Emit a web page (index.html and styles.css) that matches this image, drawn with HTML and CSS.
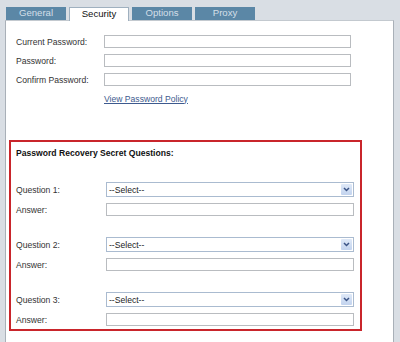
FILE: index.html
```html
<!DOCTYPE html>
<html>
<head>
<meta charset="utf-8">
<link rel="stylesheet" href="styles.css">
</head>
<body>
<div class="tabs">
  <div class="tab">General</div>
  <div class="tab active">Security</div>
  <div class="tab">Options</div>
  <div class="tab">Proxy</div>
</div>
<div class="panel">
  <div class="pw">
    <div class="row"><span class="lbl">Current Password:</span><span class="inp"></span></div>
    <div class="row"><span class="lbl">Password:</span><span class="inp"></span></div>
    <div class="row"><span class="lbl">Confirm Password:</span><span class="inp"></span></div>
    <div class="row link-row"><span class="lbl"></span><a class="link">View Password Policy</a></div>
  </div>
  <div class="recovery">
    <div class="title">Password Recovery Secret Questions:</div>
    <div class="q">
      <div class="row"><span class="lbl2">Question 1:</span><span class="sel"><span class="val">--Select--</span><span class="arrow"><svg width="7" height="5" viewBox="0 0 7 5"><path d="M1 1 L3.5 3.5 L6 1" fill="none" stroke="#3b5486" stroke-width="1.5"/></svg></span></span></div>
      <div class="row"><span class="lbl2">Answer:</span><span class="ans"></span></div>
    </div>
    <div class="q">
      <div class="row"><span class="lbl2">Question 2:</span><span class="sel"><span class="val">--Select--</span><span class="arrow"><svg width="7" height="5" viewBox="0 0 7 5"><path d="M1 1 L3.5 3.5 L6 1" fill="none" stroke="#3b5486" stroke-width="1.5"/></svg></span></span></div>
      <div class="row"><span class="lbl2">Answer:</span><span class="ans"></span></div>
    </div>
    <div class="q">
      <div class="row"><span class="lbl2">Question 3:</span><span class="sel"><span class="val">--Select--</span><span class="arrow"><svg width="7" height="5" viewBox="0 0 7 5"><path d="M1 1 L3.5 3.5 L6 1" fill="none" stroke="#3b5486" stroke-width="1.5"/></svg></span></span></div>
      <div class="row"><span class="lbl2">Answer:</span><span class="ans"></span></div>
    </div>
  </div>
</div>
</body>
</html>
```
FILE: styles.css
```css
html, body { margin: 0; padding: 0; }
body {
  background: #d9dee4;
  font-family: "Liberation Sans", Arial, sans-serif;
  font-size: 8.6px;
  color: #333;
  width: 400px;
  height: 342px;
  overflow: hidden;
}
.tabs {
  display: flex;
  gap: 3px;
  padding: 7px 0 0 6px;
  height: 13px;
}
.tab {
  width: 60px;
  height: 13px;
  background: #5b87a6;
  color: #d3dfe8;
  text-align: center;
  line-height: 12px;
  font-size: 9.6px;
  box-sizing: border-box;
}
.tab.active {
  background: #fff;
  color: #111;
  border: 1px solid #9fb0bf;
  border-bottom: none;
  height: 14px;
  line-height: 11px;
}
.panel {
  margin-left: 5px;
  width: 389px;
  height: 330px;
  background: #fff;
  border: 1px solid #a9b0b8;
  border-top: 1px solid #c3c9cf;
  box-sizing: border-box;
  padding-top: 14px;
}
.pw { padding-left: 10px; }
.pw .row {
  display: flex;
  align-items: center;
  height: 13px;
  margin-bottom: 6px;
}
.lbl { width: 88px; flex: none; }
.inp {
  width: 247px;
  height: 13px;
  border: 1px solid #b9bcc0;
  box-sizing: border-box;
  background: #fff;
}
.link-row { margin-top: 6px; }
.link { color: #3d5a8e; text-decoration: underline; }
.recovery {
  margin: 35px 0 0 3px;
  width: 353px;
  height: 191px;
  border: 2px solid #c9252b;
  box-sizing: border-box;
  padding: 6px 0 0 5px;
}
.title { font-weight: bold; color: #111; height: 10px; line-height: 10px; }
.q { margin-top: 21px; }
.recovery .title + .q { margin-top: 24px; }
.q .row { display: flex; align-items: center; }
.q .row + .row { margin-top: 6px; }
.lbl2 { width: 90px; flex: none; }
.sel {
  width: 248px;
  height: 15px;
  border: 1px solid #aabbd0;
  box-sizing: border-box;
  display: flex;
  align-items: center;
  justify-content: space-between;
  background: #fff;
}
.val { padding-left: 2px; color: #222; }
.arrow {
  width: 11px;
  height: 11px;
  margin-right: 1px;
  background: linear-gradient(#dfe9f8, #c2d3ee);
  display: flex;
  align-items: center;
  justify-content: center;
  border-radius: 1px;
}
.ans {
  width: 248px;
  height: 13px;
  border: 1px solid #b9bcc0;
  box-sizing: border-box;
}
```
